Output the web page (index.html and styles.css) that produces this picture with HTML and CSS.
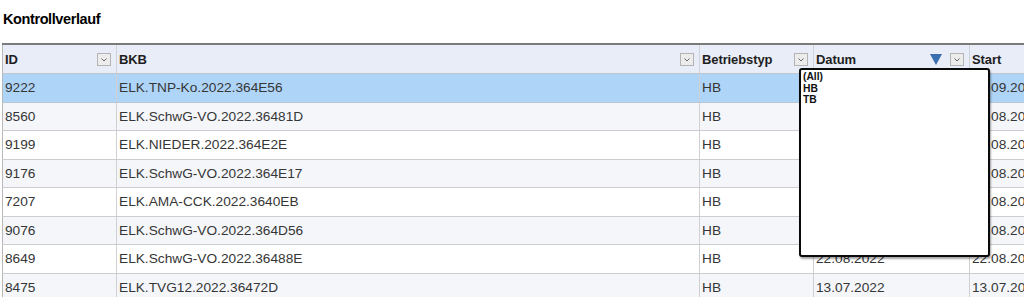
FILE: index.html
```html
<!DOCTYPE html>
<html lang="de">
<head>
<meta charset="utf-8">
<title>Kontrollverlauf</title>
<link rel="stylesheet" href="styles.css">
</head>
<body>
<div class="page">
  <h1 class="title">Kontrollverlauf</h1>
  <div class="grid-wrap">
    <table class="grid">
      <colgroup>
        <col class="c-id"><col class="c-bkb"><col class="c-typ"><col class="c-dat"><col class="c-start">
      </colgroup>
      <thead>
        <tr>
          <th><div class="hcell"><span>ID</span><span class="fbtn"><svg viewBox="0 0 14 13" width="14" height="13"><path d="M4.5 5.5 L7 8 L9.5 5.5" fill="none" stroke="#666" stroke-width="1"/></svg></span></div></th>
          <th><div class="hcell"><span>BKB</span><span class="fbtn"><svg viewBox="0 0 14 13" width="14" height="13"><path d="M4.5 5.5 L7 8 L9.5 5.5" fill="none" stroke="#666" stroke-width="1"/></svg></span></div></th>
          <th><div class="hcell"><span>Betriebstyp</span><span class="fbtn"><svg viewBox="0 0 14 13" width="14" height="13"><path d="M4.5 5.5 L7 8 L9.5 5.5" fill="none" stroke="#666" stroke-width="1"/></svg></span></div></th>
          <th><div class="hcell"><span>Datum</span><span class="sort"><svg viewBox="0 0 12 12" width="12" height="12"><path d="M0 1 H12 L6 12 Z" fill="#3a6fb0"/></svg></span><span class="fbtn"><svg viewBox="0 0 14 13" width="14" height="13"><path d="M4.5 5.5 L7 8 L9.5 5.5" fill="none" stroke="#666" stroke-width="1"/></svg></span></div></th>
          <th><div class="hcell"><span>Start</span></div></th>
        </tr>
      </thead>
      <tbody>
        <tr class="sel"><td>9222</td><td>ELK.TNP-Ko.2022.364E56</td><td>HB</td><td>01.09.2022</td><td>01.09.2022</td></tr>
        <tr class="alt"><td>8560</td><td>ELK.SchwG-VO.2022.36481D</td><td>HB</td><td>31.08.2022</td><td>31.08.2022</td></tr>
        <tr><td>9199</td><td>ELK.NIEDER.2022.364E2E</td><td>HB</td><td>30.08.2022</td><td>30.08.2022</td></tr>
        <tr class="alt"><td>9176</td><td>ELK.SchwG-VO.2022.364E17</td><td>HB</td><td>29.08.2022</td><td>29.08.2022</td></tr>
        <tr><td>7207</td><td>ELK.AMA-CCK.2022.3640EB</td><td>HB</td><td>25.08.2022</td><td>25.08.2022</td></tr>
        <tr class="alt"><td>9076</td><td>ELK.SchwG-VO.2022.364D56</td><td>HB</td><td>23.08.2022</td><td>23.08.2022</td></tr>
        <tr><td>8649</td><td>ELK.SchwG-VO.2022.36488E</td><td>HB</td><td>22.08.2022</td><td>22.08.2022</td></tr>
        <tr class="alt"><td>8475</td><td>ELK.TVG12.2022.36472D</td><td>HB</td><td>13.07.2022</td><td>13.07.2022</td></tr>
      </tbody>
    </table>
    <div class="popup">
      <div class="opt">(All)</div>
      <div class="opt">HB</div>
      <div class="opt">TB</div>
    </div>
  </div>
</div>
</body>
</html>
```
FILE: styles.css
```css
html, body {
  margin: 0;
  padding: 0;
  background: #ffffff;
  overflow: hidden;
}
.page {
  width: 1024px;
  height: 297px;
  overflow: hidden;
  font-family: "Liberation Sans", Arial, sans-serif;
}
.title {
  margin: 0;
  padding: 11px 0 0 3px;
  height: 32px;
  box-sizing: border-box;
  font-size: 14.5px;
  font-weight: bold;
  letter-spacing: -0.4px;
  color: #000;
}
.grid-wrap {
  position: relative;
  margin: 11px 0 0 2px;
}
.grid {
  border-collapse: collapse;
  table-layout: fixed;
  width: 1080px;
  border-top: 2px solid #7a7a7a;
  border-left: 1px solid #b8b8b8;
}
.c-id { width: 114px; }
.c-bkb { width: 583px; }
.c-typ { width: 114px; }
.c-dat { width: 156px; }
.c-start { width: 113px; }
.grid th {
  height: 28px;
  padding: 0;
  background: #e9edf7;
  border-right: 1px solid #d0d3da;
  border-bottom: 1px solid #c2c5cc;
  text-align: left;
  font-size: 13px;
  font-weight: bold;
  letter-spacing: -0.1px;
  color: #1e1e1e;
}
.hcell {
  display: flex;
  align-items: center;
  padding: 0 4px 0 2px;
  gap: 6px;
}
.hcell span:first-child { flex: 1; }
.fbtn {
  display: flex;
  width: 14px;
  height: 13px;
  box-sizing: border-box;
  border: 1px solid #b4b4b4;
  background: #ececec;
  margin-right: 1px;
}
.fbtn svg { margin: -1px; }
.sort { display: flex; margin-right: 2px; }
.grid td {
  height: 27.5px;
  padding: 0 0 0 2px;
  border-right: 1px solid #d0d0d0;
  border-bottom: 1px solid #cdcdcd;
  font-size: 13.7px;
  color: #363636;
  white-space: nowrap;
  overflow: hidden;
  background: #ffffff;
}
.grid tr.alt td { background: #f5f6fa; }
.grid tr.sel td { background: #aed4f8; border-bottom-color: #b9c6d3; }
.popup {
  position: absolute;
  left: 797px;
  top: 25px;
  width: 191px;
  height: 189px;
  box-sizing: border-box;
  background: #ffffff;
  border: 2px solid #0a0a0a;
  border-radius: 3px;
  box-shadow: 1px 2px 2px rgba(0,0,0,0.35);
  padding: 1px 0 0 2px;
}
.opt {
  font-size: 10.3px;
  font-weight: bold;
  line-height: 11.5px;
  color: #111;
}
```
